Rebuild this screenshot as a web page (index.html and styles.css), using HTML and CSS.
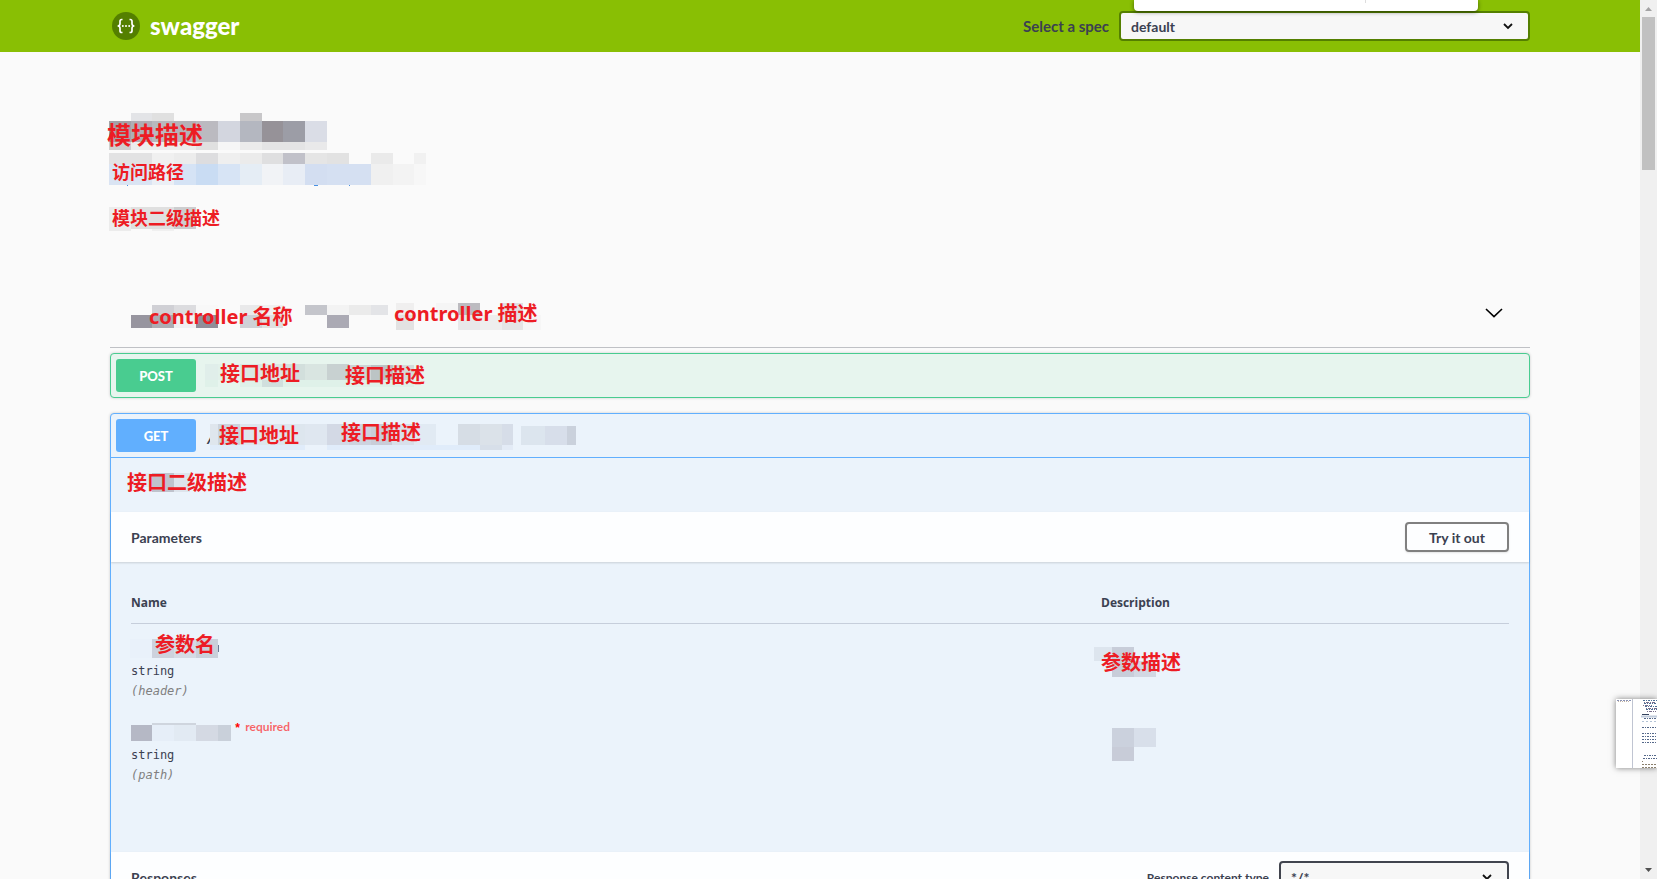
FILE: index.html
```html
<!DOCTYPE html>
<html lang="zh-CN">
<head>
	<meta charset="UTF-8">
	<title>Swagger UI</title>
	<link rel="stylesheet" href="styles.css">
</head>
<body>
	<div class="page">
		<header class="topbar">
			<div class="wrapper topbar-inner">
				<a class="logo" href="#">
					<svg width="28" height="28" viewBox="0 0 28 28">
						<circle cx="14" cy="14" r="14" fill="#547f00"/>
						<g fill="none" stroke="#fff" stroke-width="1.7">
							<path d="M10.5 7.5H9.8Q8 7.5 8 9.3V11.8Q8 14 5.6 14Q8 14 8 16.2V18.7Q8 20.5 9.8 20.5H10.5"/>
							<path d="M17.5 7.5H18.2Q20 7.5 20 9.3V11.8Q20 14 22.4 14Q20 14 20 16.2V18.7Q20 20.5 18.2 20.5H17.5"/>
						</g>
						<g fill="#fff">
							<circle cx="10.8" cy="14" r="1"/>
							<circle cx="14" cy="14" r="1"/>
							<circle cx="17.2" cy="14" r="1"/>
						</g>
					</svg>
					<span>swagger</span>
				</a>
				<label class="spec-label" for="spec">Select a spec</label>
				<div class="select-wrap spec-wrap">
					<select id="spec" class="spec-select">
						<option>default</option>
					</select>
					<svg class="arrow" width="10" height="7" viewBox="0 0 10 7"><path d="M1 1L5 5L9 1" fill="none" stroke="#111" stroke-width="1.8"/></svg>
				</div>
			</div>
			<div class="popup"></div>
		</header>

		<main class="wrapper">
			<section class="info">
				<div class="mask">
					<svg width="218" height="37" viewBox="110 113 218 37">
						<rect x="131" y="113" width="21" height="8" fill="#e3e4e7"/>
						<rect x="152" y="113" width="22" height="8" fill="#e0e0e0"/>
						<rect x="240" y="113" width="22" height="8" fill="#c8c7c9"/>
						<rect x="109" y="121" width="22" height="21" fill="#a3a2a8"/>
						<rect x="131" y="121" width="21" height="21" fill="#afaeb5"/>
						<rect x="152" y="121" width="22" height="21" fill="#b8b9be"/>
						<rect x="174" y="121" width="22" height="21" fill="#b4b3b8"/>
						<rect x="196" y="121" width="22" height="21" fill="#bbbac0"/>
						<rect x="218" y="121" width="22" height="21" fill="#d3d6df"/>
						<rect x="240" y="121" width="22" height="21" fill="#b4b7c0"/>
						<rect x="262" y="121" width="21" height="21" fill="#969298"/>
						<rect x="283" y="121" width="22" height="21" fill="#9c9da6"/>
						<rect x="305" y="121" width="22" height="21" fill="#dadde6"/>
						<rect x="109" y="142" width="22" height="8" fill="#cfcfcf"/>
						<rect x="131" y="142" width="65" height="8" fill="#ececec"/>
						<rect x="196" y="142" width="22" height="8" fill="#e0e0e0"/>
						<rect x="218" y="142" width="22" height="8" fill="#f6f6f6"/>
						<rect x="240" y="142" width="22" height="8" fill="#ebebeb"/>
						<rect x="262" y="142" width="43" height="8" fill="#e4e4e5"/>
						<rect x="305" y="142" width="22" height="8" fill="#e9e9ea"/>
					</svg>
					<h1 class="note note-title">模块描述</h1>
				</div>
				<div class="mask mask-url">
					<svg width="317" height="33" viewBox="110 153 317 33">
						<rect x="109" y="153" width="43" height="11" fill="#e2e2e3"/>
						<rect x="152" y="153" width="22" height="11" fill="#f0f0f0"/>
						<rect x="174" y="153" width="22" height="11" fill="#ececec"/>
						<rect x="196" y="153" width="22" height="11" fill="#dddddf"/>
						<rect x="218" y="153" width="22" height="11" fill="#efefef"/>
						<rect x="240" y="153" width="22" height="11" fill="#ebebeb"/>
						<rect x="262" y="153" width="21" height="11" fill="#dfdfe0"/>
						<rect x="283" y="153" width="22" height="11" fill="#c1c1c9"/>
						<rect x="305" y="153" width="22" height="11" fill="#e5e5e5"/>
						<rect x="327" y="153" width="22" height="11" fill="#e2e2e2"/>
						<rect x="371" y="153" width="22" height="11" fill="#eaeaea"/>
						<rect x="414" y="153" width="12" height="11" fill="#f1f1f1"/>
						<rect x="109" y="164" width="43" height="21" fill="#dae4f3"/>
						<rect x="152" y="164" width="22" height="21" fill="#ebeff5"/>
						<rect x="174" y="164" width="22" height="21" fill="#d5e3f5"/>
						<rect x="196" y="164" width="22" height="21" fill="#c9dcf3"/>
						<rect x="218" y="164" width="22" height="21" fill="#d7e4f5"/>
						<rect x="240" y="164" width="22" height="21" fill="#e5edf5"/>
						<rect x="262" y="164" width="21" height="21" fill="#f1f3f6"/>
						<rect x="283" y="164" width="22" height="21" fill="#e8edf5"/>
						<rect x="305" y="164" width="22" height="21" fill="#d3def1"/>
						<rect x="327" y="164" width="44" height="21" fill="#d5e0f2"/>
						<rect x="371" y="164" width="22" height="21" fill="#f0f0f0"/>
						<rect x="393" y="164" width="21" height="21" fill="#f3f3f3"/>
						<rect x="414" y="164" width="12" height="21" fill="#f7f7f7"/>
						<path d="M127 185h1v1h-1zM314 185h4v1h-4zM349 185h1v1h-1z" fill="#4990e2"/>
					</svg>
					<span class="note note-small">访问路径</span>
				</div>
				<div class="mask mask-desc">
					<svg width="90" height="24" viewBox="110 207 90 24">
						<rect x="109" y="207" width="22" height="24" fill="#ececec"/>
						<rect x="131" y="207" width="43" height="22" fill="#e0e0e0"/>
						<rect x="174" y="207" width="22" height="22" fill="#cdcdcf"/>
						<rect x="152" y="229" width="22" height="2" fill="#f0f0f0"/>
					</svg>
					<span class="note note-small">模块二级描述</span>
				</div>
			</section>

			<section>
				<h2 class="tag-header">
					<span class="mask">
						<svg width="412" height="28" viewBox="130 299 412 28">
							<rect x="152" y="305" width="22" height="10" fill="#d0d0d5"/>
							<rect x="174" y="305" width="22" height="10" fill="#dcdcdf"/>
							<rect x="196" y="305" width="22" height="10" fill="#f8f8f8"/>
							<rect x="240" y="305" width="22" height="10" fill="#e9e9ea"/>
							<rect x="262" y="305" width="22" height="10" fill="#f0f0f0"/>
							<rect x="131" y="315" width="21" height="13" fill="#97959f"/>
							<rect x="152" y="315" width="22" height="13" fill="#adacb2"/>
							<rect x="174" y="315" width="22" height="13" fill="#f0f0f2"/>
							<rect x="196" y="315" width="22" height="13" fill="#918e99"/>
							<rect x="240" y="315" width="22" height="13" fill="#cfd1d6"/>
							<rect x="262" y="315" width="21" height="13" fill="#e0e0e0"/>
							<rect x="305" y="305" width="22" height="10" fill="#c4c5cb"/>
							<rect x="327" y="305" width="22" height="10" fill="#f3f3f3"/>
							<rect x="349" y="305" width="22" height="10" fill="#ebebeb"/>
							<rect x="371" y="305" width="17" height="10" fill="#e3e4e7"/>
							<rect x="327" y="315" width="22" height="13" fill="#abaab4"/>
							<rect x="396" y="303" width="18" height="12" fill="#f0efef"/>
							<rect x="396" y="315" width="18" height="15" fill="#e3e2e2"/>
							<rect x="436" y="303" width="22" height="12" fill="#f5f5f5"/>
							<rect x="458" y="303" width="22" height="12" fill="#bcbbc0"/>
							<rect x="458" y="315" width="22" height="15" fill="#e8e8e9"/>
							<rect x="480" y="315" width="22" height="15" fill="#eeeeee"/>
							<rect x="502" y="303" width="21" height="12" fill="#dfe0e3"/>
							<rect x="502" y="315" width="21" height="15" fill="#e5e5e5"/>
							<rect x="523" y="315" width="18" height="15" fill="#f6f6f6"/>
						</svg>
						<span class="note note-ctrl">controller 名称</span>
						<span class="note note-ctrl-desc">controller 描述</span>
					</span>
					<button class="expand" type="button" aria-label="collapse">
						<svg width="18" height="10" viewBox="0 0 18 10"><path d="M1 1L9 8.6L17 1" fill="none" stroke="#000" stroke-width="1.6"/></svg>
					</button>
				</h2>

				<div class="opblock opblock-post">
					<div class="summary">
						<button class="method" type="button">POST</button>
						<span class="mask">
							<svg width="372" height="33" viewBox="204 359 372 33">
								<rect x="205" y="364" width="13" height="16" fill="#e0eeea"/>
								<rect x="218" y="364" width="22" height="16" fill="#e2f1ea"/>
								<rect x="240" y="364" width="44" height="16" fill="#d9e7e3"/>
								<rect x="284" y="364" width="21" height="16" fill="#d2dfdc"/>
								<rect x="305" y="364" width="22" height="16" fill="#d9e5e1"/>
								<rect x="327" y="364" width="22" height="16" fill="#c8d1d1"/>
								<rect x="349" y="365" width="22" height="15" fill="#ccd5d5"/>
								<rect x="371" y="365" width="22" height="15" fill="#bcc4c5"/>
								<rect x="393" y="365" width="21" height="15" fill="#d2dcda"/>
								<rect x="205" y="380" width="13" height="7" fill="#dff1e9"/>
								<rect x="240" y="380" width="22" height="7" fill="#dff1e9"/>
								<rect x="262" y="380" width="21" height="7" fill="#d0dfdd"/>
								<rect x="283" y="380" width="131" height="7" fill="#dff1e9"/>
							</svg>
							<span class="note note-path">接口地址</span>
							<span class="note note-op">接口描述</span>
						</span>
					</div>
				</div>

				<div class="opblock opblock-get">
					<div class="summary">
						<button class="method" type="button">GET</button>
						<span class="mask">
							<svg width="372" height="33" viewBox="204 419 372 33">
								<text class="slash" x="206" y="444">/</text>
								<rect x="210" y="424" width="8" height="21" fill="#dfe6ed"/>
								<rect x="218" y="424" width="22" height="21" fill="#ccd4dd"/>
								<rect x="240" y="424" width="65" height="21" fill="#dde6ee"/>
								<rect x="305" y="424" width="22" height="21" fill="#dfe7f0"/>
								<rect x="327" y="424" width="22" height="21" fill="#d3d9e5"/>
								<rect x="349" y="424" width="22" height="21" fill="#cdd3df"/>
								<rect x="371" y="424" width="21" height="21" fill="#c9cdd8"/>
								<rect x="392" y="424" width="22" height="21" fill="#d8e0ea"/>
								<rect x="414" y="424" width="22" height="21" fill="#e1eaf3"/>
								<rect x="210" y="445" width="95" height="5" fill="#e0ecfa"/>
								<rect x="327" y="445" width="153" height="5" fill="#e0ecfa"/>
								<rect x="458" y="424" width="22" height="21" fill="#d6dde5"/>
								<rect x="480" y="424" width="22" height="21" fill="#dbe2e9"/>
								<rect x="480" y="445" width="22" height="5" fill="#d7dfe9"/>
								<rect x="502" y="424" width="11" height="21" fill="#d6dde8"/>
								<rect x="502" y="445" width="11" height="5" fill="#e3ebf6"/>
								<rect x="521" y="426" width="24" height="19" fill="#dce5ee"/>
								<rect x="545" y="426" width="22" height="19" fill="#d7deea"/>
								<rect x="567" y="426" width="9" height="19" fill="#cad1dc"/>
							</svg>
							<span class="note note-path">接口地址</span>
							<span class="note note-op">接口描述</span>
						</span>
					</div>

					<div class="op-desc">
						<div class="mask">
							<svg width="120" height="22" viewBox="126 471 120 22">
								<rect x="130" y="473" width="22" height="14" fill="#e2e9f1"/>
								<rect x="152" y="473" width="22" height="19" fill="#bfc3cd"/>
								<rect x="174" y="473" width="16" height="19" fill="#dde4ec"/>
							</svg>
							<span class="note note-block">接口二级描述</span>
						</div>
					</div>

					<div class="section-header">
						<h4>Parameters</h4>
						<button class="try-out" type="button">Try it out</button>
					</div>
					<div class="table-container">
						<table class="parameters">
							<thead>
								<tr>
									<th>Name</th>
									<th class="col-desc">Description</th>
								</tr>
							</thead>
							<tbody>
								<tr>
									<td>
										<div class="param-name mask">
											<svg width="90" height="20" viewBox="131 639 90 20">
												<rect x="130" y="639" width="22" height="19" fill="#e9f1fa"/>
												<rect x="152" y="639" width="22" height="19" fill="#cdd2dd"/>
												<rect x="174" y="639" width="22" height="19" fill="#d5dbe5"/>
												<rect x="196" y="639" width="22" height="19" fill="#c9d0da"/>
												<path d="M218.5 645v7" stroke="#6b7b96"/>
											</svg>
											<span class="note note-param">参数名</span>
										</div>
										<div class="param-type">string</div>
										<div class="param-in">(header)</div>
									</td>
									<td>
										<div class="mask">
											<svg width="60" height="40" viewBox="1101 639 60 40">
												<rect x="1094" y="647" width="18" height="14" fill="#dde5ee"/>
												<rect x="1112" y="647" width="22" height="30" fill="#c8cdd9"/>
												<rect x="1134" y="661" width="22" height="16" fill="#d2d8e3"/>
											</svg>
											<span class="note note-param-desc">参数描述</span>
										</div>
									</td>
								</tr>
								<tr>
									<td>
										<div class="param-name">
											<svg width="100" height="20" viewBox="131 723 100 20">
												<rect x="152" y="723" width="44" height="2" fill="#cfd5de"/>
												<rect x="131" y="725" width="21" height="16" fill="#b5b8c5"/>
												<rect x="152" y="725" width="22" height="16" fill="#e6eef8"/>
												<rect x="174" y="725" width="22" height="16" fill="#e2eaf3"/>
												<rect x="196" y="725" width="22" height="16" fill="#d4d9e3"/>
												<rect x="218" y="725" width="13" height="16" fill="#c9d0da"/>
											</svg>
											<span class="star">*</span>
											<span class="required">required</span>
										</div>
										<div class="param-type">string</div>
										<div class="param-in">(path)</div>
									</td>
									<td>
										<svg width="60" height="40" viewBox="1101 723 60 40">
											<rect x="1112" y="728" width="22" height="19" fill="#cbd1dd"/>
											<rect x="1134" y="728" width="22" height="19" fill="#d8dfea"/>
											<rect x="1112" y="747" width="22" height="14" fill="#c8ccd8"/>
										</svg>
									</td>
								</tr>
							</tbody>
						</table>
					</div>

					<div class="section-header">
						<h4>Responses</h4>
						<label class="content-type-label" for="contentType">Response content type</label>
						<div class="select-wrap">
							<select id="contentType" class="content-type">
								<option>*/*</option>
							</select>
							<svg class="arrow" width="10" height="7" viewBox="0 0 10 7"><path d="M1 1L5 5L9 1" fill="none" stroke="#111" stroke-width="1.8"/></svg>
						</div>
					</div>
				</div>
			</section>
		</main>
	</div>

	<div class="scrollbar">
		<svg width="7" height="4" viewBox="0 0 7 4"><path d="M0 4L3.5 0L7 4z" fill="#a3a3a3"/></svg>
		<div class="scroll-thumb"></div>
		<svg width="7" height="4" viewBox="0 0 7 4"><path d="M0 0L3.5 4L7 0z" fill="#505050"/></svg>
	</div>

	<!-- docked window preview -->
	<div class="preview">
		<svg width="41" height="69" viewBox="0 0 41 69" fill="none">
			<path d="M16.5 0v69" stroke="#c0c5d2"/>
			<path d="M1 1.5h14" stroke="#8b93b5" stroke-dasharray="2 1"/>
			<path d="M2 2.5h12" stroke="#c3b5a5" stroke-dasharray="1 1"/>
			<path d="M27 1.5h14M28 4.5h12M29 7.5h12M30 10.5h11" stroke="#4d6f97" stroke-dasharray="2 1 1 1"/>
			<path d="M28 3.5h12M27 6.5h9M30 9.5h11M31 12.5h9" stroke="#7a6f8c" stroke-dasharray="1 1 3 1"/>
			<path d="M26 15.5h7" stroke="#33415c"/>
			<path d="M25 17.5h16" stroke="#c0cbdb" stroke-width="2"/>
			<path d="M28 19.5h13M26 28.5h15M26 34.5h15M26 37.5h15M26 40.5h15M26 43.5h15M28 56.5h13M27 59.5h14" stroke="#55688a" stroke-dasharray="2 1 1 1"/>
			<path d="M26 22.5h14" stroke="#b3c3d6" stroke-dasharray="2 2"/>
			<path d="M26 62.5h1M26 65.5h15M26 68.5h15" stroke="#8a7f6c" stroke-dasharray="2 1"/>
		</svg>
	</div>
</body>
</html>
```
FILE: styles.css
```css
* {
	box-sizing: border-box;
}
body {
	margin: 0;
	display: flex;
	height: 100vh;
	overflow: hidden;
	background: #fafafa;
	color: #3b4151;
	font-family: Lato, "Noto Sans CJK SC", sans-serif;
	font-size: 14px;
}
h1, h2, h4 {
	margin: 0;
}
svg {
	display: block;
	flex: none;
	overflow: visible;
}
button, select {
	font-family: inherit;
	font-weight: 700;
	color: #3b4151;
}
.page {
	flex: 1;
	min-width: 0;
	overflow: hidden;
}
.wrapper {
	max-width: 1460px;
	margin: 0 auto;
	padding: 0 20px;
}

/* top bar */
.topbar {
	position: relative;
	background: #89bf04;
}
.topbar-inner {
	display: flex;
	align-items: center;
	height: 52px;
}
.logo {
	display: flex;
	align-items: center;
	gap: 10px;
	margin-right: auto;
	padding: 2px;
	color: #fff;
	font-size: 24px;
	font-weight: 900;
	line-height: 28px;
	text-decoration: none;
}
.spec-label {
	margin-right: 10px;
	font-size: 15px;
	font-weight: 700;
}
.select-wrap {
	position: relative;
}
.spec-wrap {
	width: 411px;
}
select {
	appearance: none;
	display: block;
	width: 100%;
	padding: 0 10px;
	border-radius: 4px;
	background: #f7f7f7;
	font-size: 14px;
}
.arrow {
	position: absolute;
	right: 17px;
	top: 50%;
	margin-top: -3px;
	pointer-events: none;
}
.spec-select {
	height: 30px;
	border: 2px solid #547f00;
}
.popup {
	position: absolute;
	top: 0;
	right: 162px;
	width: 344px;
	height: 11px;
	background: #fff;
	border-radius: 0 0 4px 4px;
	box-shadow: 0 1px 4px rgba(0,0,0,.5);
}
.popup::after {
	content: "";
	position: absolute;
	left: 231px;
	width: 1px;
	height: 3px;
	background: #ddd;
}

/* red notes over the masked text */
.mask {
	position: relative;
	display: block;
}
.note {
	position: absolute;
	color: #ed1c24;
	font-family: "Noto Sans", "Noto Sans CJK SC", sans-serif;
	font-size: 20px;
	font-weight: 700;
	line-height: 24px;
	white-space: nowrap;
}
.note-title {
	left: -3px;
	top: 10px;
	font-size: 24px;
}
.note-small {
	left: 2px;
	top: 7px;
	font-size: 18px;
}
.mask-desc .note-small {
	top: -1px;
}
.note-ctrl {
	left: 19px;
	top: 6px;
}
.note-ctrl-desc {
	left: 264px;
	top: 3px;
}
.note-path {
	left: 16px;
	top: 3px;
}
.note-op {
	left: 141px;
	top: 5px;
}
.opblock-get .note-path {
	left: 15px;
	top: 5px;
}
.opblock-get .note-op {
	left: 137px;
	top: 2px;
}
.note-block {
	left: 1px;
	top: 0;
}
.note-param {
	left: 24px;
	top: -6px;
}
.note-param-desc {
	left: 0;
	top: 12px;
}

/* info */
.info {
	padding: 61px 0 48px;
}
.mask-url {
	margin: 3px 0 21px;
}
.tag-header {
	display: flex;
	align-items: center;
	justify-content: space-between;
	height: 69px;
	padding: 0 20px;
	border-bottom: 1px solid #bfc1c5;
}
.expand {
	padding: 0 7px;
	border: none;
	background: none;
}

/* operations */
.opblock {
	margin: 5px 0 15px;
	border: 1px solid #49cc90;
	border-radius: 4px;
	box-shadow: 0 0 3px rgba(0,0,0,.19);
}
.opblock-post {
	background: #e7f5ee;
}
.opblock-get {
	border-color: #61affe;
	background: #ebf3fb;
}
.summary {
	display: flex;
	align-items: center;
	gap: 8px;
	padding: 5px;
}
.opblock-get .summary {
	border-bottom: 1px solid #61affe;
}
.method {
	width: 80px;
	height: 33px;
	border: none;
	border-radius: 3px;
	background: #49cc90;
	color: #fff;
	font-size: 13px;
	font-weight: 900;
}
.opblock-get .method {
	background: #61affe;
}
.slash {
	fill: #3b4151;
	font-family: "Liberation Mono", monospace;
	font-size: 16px;
	font-weight: 700;
}
.op-desc {
	padding: 13px 15px 19px;
}
.section-header {
	display: flex;
	align-items: center;
	height: 50px;
	padding: 0 20px;
	background: rgba(255,255,255,.9);
	box-shadow: 0 1px 2px rgba(0,0,0,.15);
}
.section-header h4 {
	margin-right: auto;
	font-size: 14px;
}
.try-out {
	width: 104px;
	height: 30px;
	border: 2px solid gray;
	border-radius: 4px;
	background: transparent;
	font-size: 14px;
	box-shadow: 0 1px 2px rgba(0,0,0,.1);
}
.content-type-label {
	margin-right: 10px;
	font-size: 12px;
	font-weight: 700;
}
.content-type {
	width: 230px;
	height: 32px;
	border: 2px solid #41444e;
}
.table-container {
	padding: 20px 20px 60px;
}
.parameters {
	width: 100%;
	border-collapse: collapse;
}
.parameters th {
	padding: 12px 0;
	border-bottom: 1px solid #c6cedb;
	font-family: "Open Sans", sans-serif;
	font-size: 12px;
	line-height: 17px;
	text-align: left;
}
.col-desc {
	width: 408px;
}
.parameters td {
	padding: 15px 0 7px;
	vertical-align: top;
}
.param-name {
	display: flex;
	height: 20px;
	margin-bottom: 2px;
	line-height: 8px;
}
.star {
	margin: 2px 4px 0 3px;
	color: #f00;
	font-family: "Liberation Mono", monospace;
	font-size: 12px;
	font-weight: 700;
}
.required {
	color: rgba(255,0,0,.6);
	font-size: 12px;
	font-weight: 700;
}
.param-type, .param-in {
	font-family: "DejaVu Sans Mono", monospace;
	font-size: 12px;
	line-height: 20px;
}
.param-in {
	color: gray;
	font-style: italic;
}

/* window scrollbar */
.scrollbar {
	display: flex;
	flex-direction: column;
	align-items: center;
	width: 17px;
	padding: 7px 0;
	background: #f0f0f0;
}
.scroll-thumb {
	width: 13px;
	height: 153px;
	margin: 6px 0 auto;
	background: #c1c1c1;
}
.preview {
	position: fixed;
	top: 699px;
	right: 0;
	background: #fff;
	box-shadow: 0 0 6px rgba(0,0,0,.5);
}
```
